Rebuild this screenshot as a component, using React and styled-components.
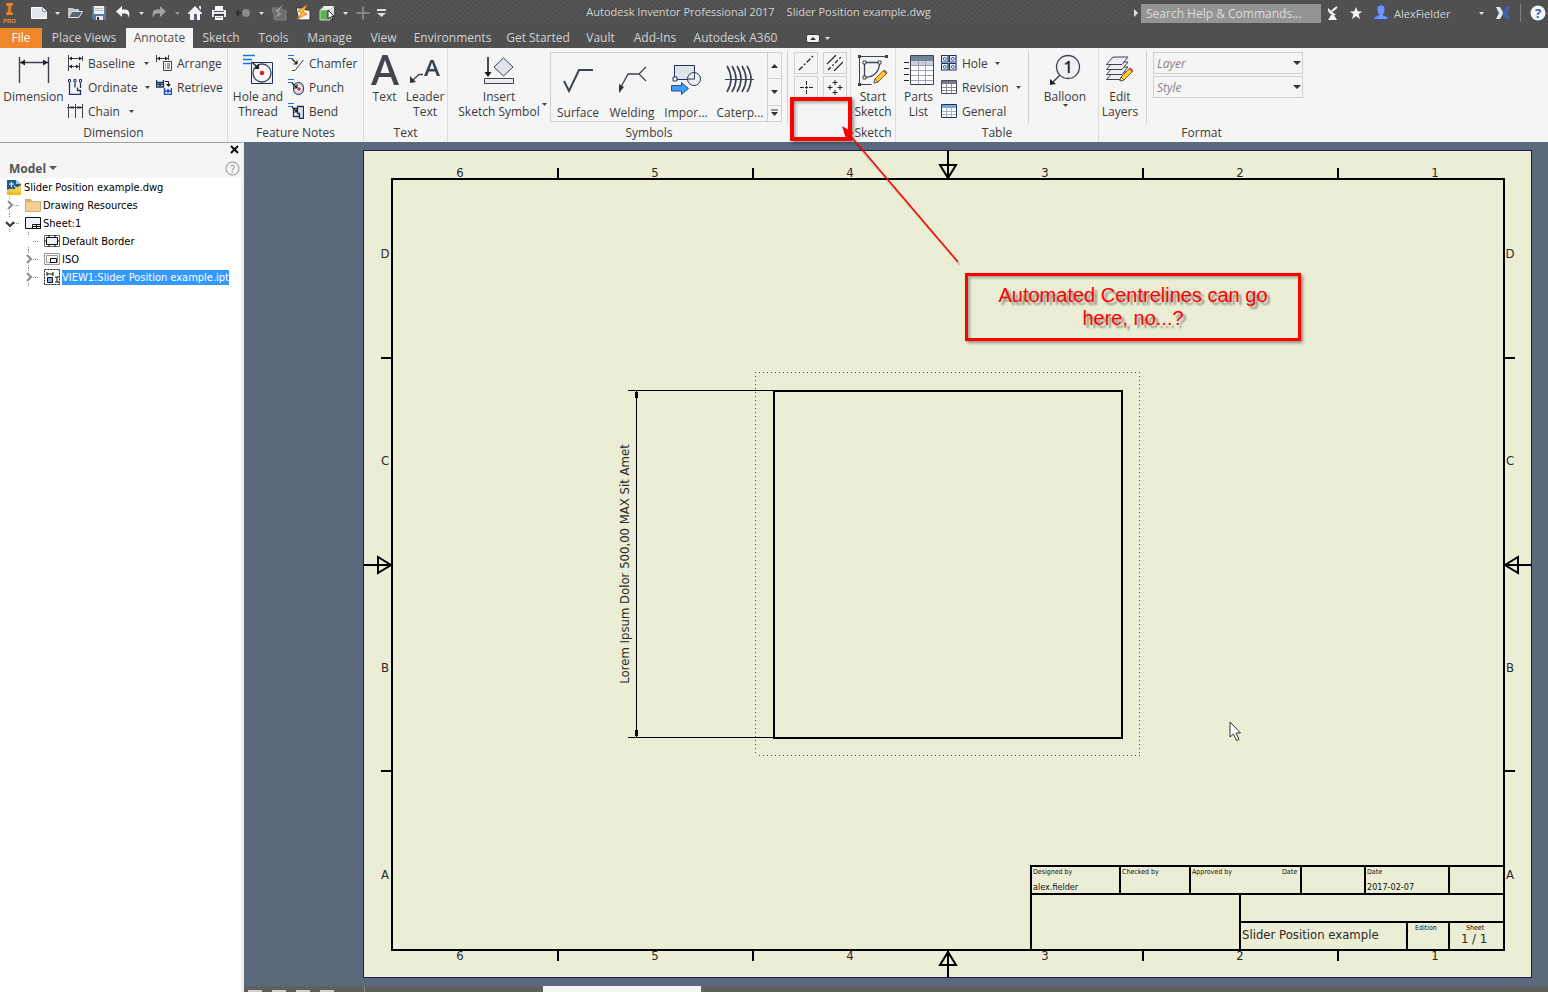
import React from "react";
import styled, { createGlobalStyle, css } from "styled-components";

const GlobalStyle = createGlobalStyle`
  *, *::before, *::after { box-sizing: border-box; }
  html, body { margin: 0; padding: 0; }
  body { font: 12px/15px "Open Sans", "Noto Sans", sans-serif; color: #3b3b3b; background: #fff; }
  button, input, select { font: inherit; color: inherit; border: 0; padding: 0; margin: 0; background: none; border-radius: 0; }
  ul { list-style: none; margin: 0; padding: 0; }
  svg { display: block; flex: none; }
`;

/* ---------- shell ---------- */
const Shell = styled.div`
  position: relative;
  display: flex;
  flex-direction: column;
  height: 100vh;
  overflow: hidden;
`;
const TitleBar = styled.header`
  display: flex;
  flex: none;
  height: 28px;
  background: #505050;
  color: #d2d2d2;
`;
const QuickAccess = styled.div`
  display: flex;
  flex: none;
  height: 26px;
  align-items: center;
`;
const AppButton = styled.button`
  width: 27px;
  padding-left: 3px;
`;
const QuickButton = styled.button`
  display: flex;
  align-items: center;
  justify-content: center;
  width: 24px;
  height: 24px;
  opacity: ${(p) => (p.$dim ? 0.5 : 1)};
`;
const QuickCaret = styled.button`
  display: flex;
  align-items: center;
  justify-content: center;
  width: 12px;
  height: 24px;
  opacity: ${(p) => (p.$dim ? 0.5 : 1)};
`;
const WindowTitle = styled.div`
  display: flex;
  flex: 1;
  justify-content: center;
  gap: 12px;
  height: 24px;
  font-size: 11px;
  line-height: 24px;
  white-space: nowrap;
  background: repeating-linear-gradient(135deg, #4e4e4e 0 2px, #545454 2px 4px);
`;
const Account = styled.div`
  display: flex;
  flex: none;
  align-items: center;
  width: 418px;
  height: 26px;
`;
const SearchBox = styled.input`
  width: 180px;
  height: 19px;
  padding: 0 5px;
  margin-right: 2px;
  background: #949494;
  &::placeholder { color: #dcdcdc; opacity: 1; }
`;
const IconButton = styled.button`
  display: flex;
  align-items: center;
  justify-content: center;
  width: ${(p) => p.$w || 24}px;
  height: 20px;
`;
const UserName = styled.button`
  width: 82px;
  height: 20px;
  padding-left: 1px;
  text-align: left;
  font-size: 11px;
`;
const Rule = styled.span`
  width: 1px;
  height: 18px;
  margin: 0 7px 0 1px;
  background: #808080;
`;

/* ---------- ribbon tabs ---------- */
const TabBar = styled.nav`
  display: flex;
  flex: none;
  height: 20px;
  background: #505050;
`;
const Tab = styled.button`
  width: ${(p) => p.$w}px;
  height: 20px;
  line-height: 20px;
  white-space: nowrap;
  text-align: center;
  color: #d2d2d2;
  ${(p) => p.$kind === "file" && css`background: #f0862a; color: #fff;`}
  ${(p) => p.$kind === "active" && css`background: #f5f5f5; color: #505050;`}
`;
const Collapse = styled.button`
  display: flex;
  align-items: center;
  gap: 5px;
  margin-left: 21px;
`;

/* ---------- ribbon ---------- */
const Ribbon = styled.div`
  display: flex;
  flex: none;
  height: 94px;
  background: #f5f5f5;
`;
const PanelBox = styled.section`
  display: flex;
  flex-direction: column;
  flex: none;
  width: ${(p) => p.$w}px;
  border-right: 1px solid ${(p) => (p.$last ? "transparent" : "#dcdcdc")};
`;
const PanelBody = styled.div`
  display: flex;
  height: 76px;
  padding-top: 3px;
`;
const PanelName = styled.h2`
  margin: 0;
  font-size: 12px;
  font-weight: 400;
  line-height: 18px;
  height: 18px;
  text-align: center;
`;
const Large = styled.button`
  position: relative;
  display: flex;
  flex-direction: column;
  align-items: center;
  justify-content: flex-start;
  flex: none;
  width: ${(p) => p.$w}px;
  height: 73px;
  white-space: nowrap;
  text-align: center;
`;
const LargeIcon = styled.span`
  display: flex;
  align-items: center;
  justify-content: center;
  height: 38px;
`;
const CornerCaret = styled.span`
  position: absolute;
  right: 3px;
  bottom: 18px;
`;
const Column = styled.div`
  display: flex;
  flex-direction: column;
  flex: none;
  width: ${(p) => p.$w}px;
`;
const Small = styled.button`
  display: flex;
  align-items: center;
  gap: 5px;
  height: 24px;
  white-space: nowrap;
  text-align: left;
`;
const SmallCaret = styled.span`
  margin-left: ${(p) => p.$gap}px;
`;
const Divider = styled.span`
  flex: none;
  width: 1px;
  height: 72px;
  margin: 0 6px 0 5px;
  background: #cfcfcf;
`;
const Gallery = styled.div`
  display: flex;
  flex: none;
  width: 232px;
  height: 70px;
  margin-top: 1px;
  border: 1px solid #cfcfcf;
`;
const GalleryItem = styled.button`
  display: flex;
  flex-direction: column;
  align-items: center;
  flex: 1;
  height: 68px;
  white-space: nowrap;
`;
const GalleryIcon = styled.span`
  display: flex;
  align-items: center;
  height: 52px;
`;
const Scroller = styled.div`
  display: flex;
  flex-direction: column;
  width: 14px;
  border-left: 1px solid #cfcfcf;
`;
const ScrollButton = styled.button`
  display: flex;
  align-items: center;
  justify-content: center;
  flex: ${(p) => p.$grow || 1};
  border-bottom: 1px solid #cfcfcf;
  &:last-child { border-bottom: 0; }
`;
const ToolGrid = styled.div`
  display: grid;
  grid-template-columns: 24px 24px;
  grid-auto-rows: 22px;
  gap: 2px 5px;
  padding-top: 1px;
`;
const ToolButton = styled.button`
  display: flex;
  align-items: center;
  justify-content: center;
  border: 1px solid #cfcfcf;
`;
const Selects = styled.div`
  display: flex;
  flex-direction: column;
  gap: 2px;
  padding-top: 1px;
`;
const SelectWrap = styled.label`
  position: relative;
  display: block;
  svg { position: absolute; right: 2px; top: 9px; pointer-events: none; }
`;
const Select = styled.select`
  appearance: none;
  display: block;
  width: 150px;
  height: 22px;
  padding: 0 3px;
  border: 1px solid #cfcfcf;
  color: #858585;
  font-style: italic;
`;

/* ---------- browser ---------- */
const Work = styled.div`
  display: flex;
  flex: 1;
  min-height: 0;
`;
const Browser = styled.aside`
  flex: none;
  width: 244px;
  background: #fff;
  border-top: 1px solid #a0a0a0;
  border-right: 3px solid #f0f0f0;
`;
const BrowserTop = styled.div`
  display: flex;
  align-items: flex-start;
  justify-content: flex-end;
  height: 15px;
  padding: 2px 2px 0 0;
  background: #f5f5f5;
`;
const BrowserButton = styled.button`
  display: flex;
`;
const BrowserHead = styled.div`
  display: flex;
  align-items: center;
  justify-content: space-between;
  height: 20px;
  padding: 0 1px 0 9px;
  background: #f5f5f5;
`;
const ModelButton = styled.button`
  display: flex;
  align-items: center;
  gap: 3px;
  font-size: 12px;
  font-weight: 700;
  color: #555;
`;
const TreeRow = styled.li`
  display: flex;
  align-items: center;
  height: 18px;
  padding-left: ${(p) => p.$indent}px;
  font: 11px/14px "DejaVu Sans Condensed", "Noto Sans", sans-serif;
  color: #000;
  white-space: nowrap;
`;
const Twisty = styled.span`
  flex: none;
  width: 20px;
`;
const TreeLabel = styled.span`
  margin-left: 2px;
  padding-top: 1px;
  ${(p) => p.$selected && css`background: #3399ff; color: #fff;`}
`;

/* ---------- drawing area ---------- */
const Viewport = styled.main`
  display: flex;
  flex-direction: column;
  flex: 1;
  min-width: 0;
  background: #5b697c;
`;
const SheetArea = styled.div`
  flex: 1;
  min-height: 0;
  overflow: hidden;
  padding: 8px 16px 8px 119px;
`;
const SheetSvg = styled.svg`
  width: 100%;
  height: auto;
  font-family: "DejaVu Sans Condensed", "Noto Sans", sans-serif;
  fill: #2a2a2a;
`;
const StatusBar = styled.footer`
  display: flex;
  flex: none;
  height: 6px;
  background: #5f5f5f;
`;
const StatusTools = styled.div`
  display: flex;
  align-items: flex-end;
  gap: 10px;
  width: 121px;
  padding-left: 4px;
  border-right: 1px solid #8a8a8a;
`;
const StatusTool = styled.span`
  width: 14px;
  height: 2px;
  background: #cfcfcf;
`;
const DocTab = styled.div`
  width: 158px;
  margin-left: 178px;
  background: #f5f5f5;
`;

/* ---------- mark-up over the window ---------- */
const Highlight = styled.div`
  position: absolute;
  left: 790px;
  top: 97px;
  width: 62px;
  height: 44px;
  border: 4px solid #f00;
  background: #f5f5f5;
  box-shadow: 2px 2px 3px rgba(0, 0, 0, 0.4), inset 2px 2px 3px rgba(0, 0, 0, 0.3);
`;
const Callout = styled.div`
  position: absolute;
  left: 965px;
  top: 273px;
  width: 336px;
  padding: 8px 24px;
  border: 3px solid #f00;
  color: #f00;
  font: 20px/23px "Liberation Sans", Arial, sans-serif;
  text-align: center;
  text-shadow: 3px 3px 2px rgba(0, 0, 0, 0.4);
  box-shadow: 2px 2px 3px rgba(0, 0, 0, 0.4), inset 2px 2px 3px rgba(0, 0, 0, 0.3);
`;
const Pointer = styled.svg`
  position: absolute;
  left: ${(p) => p.$x}px;
  top: ${(p) => p.$y}px;
  pointer-events: none;
`;

/* ---------- icons ---------- */
const Ico = ({ w = 16, h = 16, children, ...rest }) => (
  <svg width={w} height={h} viewBox={`0 0 ${w} ${h}`} fill="none" aria-hidden="true" {...rest}>{children}</svg>
);
const Caret = ({ w = 5, h = 3, color = "#444" }) => (
  <Ico w={w} h={h}><path d={`M0 0H${w}L${w / 2} ${h}Z`} fill={color} /></Ico>
);
const ink = "#3b4250";
const navy = "#1d3461";

const LogoIcon = () => (
  <Ico w={14} h={22}>
    <path d="M3 1h7v2l-2 1v6l2 1v2H3v-2l2-1V4L3 3z" fill="#e8842c" />
    <path d="M5 4v6M8 4v6" stroke="#a85a18" />
    <text x="0" y="21" fontSize="6" fontFamily="Liberation Sans" fontWeight="700" fill="#e88a38">PRO</text>
  </Ico>
);
const NewIcon = () => <Ico><path d="M.5 2.500h11l4 4v7H.5z" fill="#e4e7ee" stroke="#fff" /><path d="M11.500 2.500v4h4" stroke="#8e939c" /></Ico>;
const OpenIcon = () => <Ico><path d="M1 12V3h5l1 1h5v3H5z" fill="#bfc5cf" /><path d="M1.500 12.500L5 6.500h10.500L12 12.500z" fill="#5c6470" stroke="#dfe3ea" /></Ico>;
const SaveIcon = () => <Ico><path d="M1 1h14v14H3l-2-2z" fill="#63769a" /><path d="M3 1h10v8H3z" fill="#f2f2f2" /><path d="M4 3.500h8M4 5.500h8" stroke="#b5bac4" /><path d="M5 11h7v4H5z" fill="#e6e6e6" /><path d="M6 12h2v3H6z" fill="#333" /></Ico>;
const UndoIcon = ({ flip }) => <Ico transform={flip ? "scale(-1 1)" : undefined}><path d="M1 6.500L7 1v3.500h3c4 0 5 3 4 8.500-1-3.500-2-4.500-4-4.500H7V12z" fill="#f4f4f4" /></Ico>;
const HomeIcon = () => <Ico><path d="M8 1l7 7v1h-2v6H3V9H1V8z" fill="#f4f5f8" /><path d="M12 1h2v4l-2-2z" fill="#dfe3ea" /><path d="M7 9h3v6H7z" fill="#5a6272" /></Ico>;
const PrintIcon = () => <Ico><path d="M4 1h8v5H4zM4 11h8v4H4z" fill="#fff" /><path d="M1 5h14v7h-2v-2H3v2H1z" fill="#e8ebf0" /><path d="M3 6.500h10" stroke="#555c68" /><path d="M3 9.500h10" stroke="#333" /><path d="M5 12.500h6" stroke="#999" /></Ico>;
const ReturnIcon = () => <Ico><path d="M0 8l4-4v3h3v2H4v3z" fill="#111" /><circle cx="11" cy="8" r="4" fill="#c4c4c4" /></Ico>;
const UpdateIcon = ({ on }) => (
  <Ico>
    <path d="M1 3h8l2 2h4v10H4z" fill={on ? "#f2f2f2" : "#8a8a8a"} stroke={on ? "#333" : "#b0b0b0"} />
    <path d="M12 0L3 6l4 2-5 6 10-5-4-2z" fill={on ? "#ffc83a" : "#e4e4e4"} stroke={on ? "#e2781a" : "#8a8a8a"} />
  </Ico>
);
const CubeIcon = () => <Ico><path d="M1 5l4-4h10l-4 4z" fill="#e9efe9" /><path d="M11 5l4-4v9l-4 5z" fill="#dfe5df" /><path d="M1 5h10v10H1z" fill="#62ad57" stroke="#b9deb2" /><path d="M9 5v9l2-2 1.500 3 1.500-.7-1.500-3H15z" fill="#fff" stroke="#222" /></Ico>;
const PlusIcon = () => <Ico><path d="M8 1.500v13M1.500 8h13" stroke="#858585" strokeWidth="2" /></Ico>;
const CustomizeIcon = () => <Ico w={9} h={8}><path d="M0 1h9" stroke="#ddd" strokeWidth="2" /><path d="M0 4h9L4.500 8z" fill="#ddd" /></Ico>;
const DishIcon = () => <Ico><path d="M3 3c-1 4 3 8 8 7z" fill="#eef0f3" /><path d="M7 6l5-4" stroke="#fff" strokeWidth="2" /><path d="M3 15l3-5h3l3 5z" fill="#eee" /></Ico>;
const StarIcon = () => <Ico><path d="M8 .8l2 5.200h5.300L11 9.200 12.700 15 8 11.600 3.300 15 5 9.200.7 6H6z" fill="#f2f4f8" stroke="#333" strokeWidth=".6" /></Ico>;
const UserIcon = () => <Ico><path d="M8 0c3 0 4 2 4 4s-1 5-2 6c2 .6 5 2 5.500 4.500H.5C1 12 4 10.600 6 10 5 9 4 6 4 4s1-4 4-4z" fill="#6f95ee" stroke="#2c4da8" strokeWidth=".8" /></Ico>;
const ExchangeIcon = () => <Ico><path d="M1 2h4l3.500 6L5 14H1l3-6z" fill="#dfe6f5" /><path d="M15 2h-4L7.500 8l3.500 6h4l-3-6z" fill="#3f62b8" /></Ico>;
const HelpIcon = () => <Ico><circle cx="8" cy="8" r="7.500" fill="#f5f6f8" /><text x="8" y="13" textAnchor="middle" fontSize="13" fontWeight="700" fontFamily="Open Sans" fill="#2f5fc4">?</text></Ico>;

const DimensionIcon = () => <Ico w={32} h={30}><path d="M1.500 2v26M30.500 2v26M2 7.500h28" stroke={ink} strokeWidth="1.400" /><path d="M2 7.500l5-3v6zM30 7.500l-5-3v6z" fill="#222" /></Ico>;
const BaselineIcon = () => <Ico><path d="M1.500 0v16M2 3.500h13.500M15.500 1v5M2 11.500h10M12.500 8v7" stroke={ink} /><path d="M2 3.500l3-2v4zM15 3.500l-3-2v4zM2 11.500l3-2v4zM12 11.500l-3-2v4z" fill="#222" /></Ico>;
const OrdinateIcon = () => <Ico><path d="M2.500 3.500v12h5M8 3.500v5M13.500 3.500V9M7.500 15.500h6v-4h-3V8.500" stroke={navy} strokeWidth="1.300" /><path d="M1.500.5h2v2.500h-2zM7 .5h2v2.500H7zM12.500.5h2v2.500h-2z" stroke={navy} /></Ico>;
const ChainIcon = () => <Ico><path d="M1.500 1v14M8.500 1v14M15.500 1v14M0 4.500h16" stroke={ink} /><path d="M2 4.500l2.500-1.500v3zM8 4.500L5.500 3v3zM9 4.500l2.500-1.500v3zM15 4.500L12.500 3v3z" fill="#222" /></Ico>;
const ArrangeIcon = () => <Ico><path d="M.5 0v7M12.500 0v5M1 3.500h11" stroke={ink} /><path d="M1 3.500l3-2v4zM12 3.500l-3-2v4z" fill="#222" /><path d="M7.500 6.500h8v9h-8z" fill="#fff" stroke={ink} /><path d="M9 9h1M9 11h1M9 13h1M11 9h3M11 11h3M11 13h3" stroke={ink} /></Ico>;
const RetrieveIcon = () => <Ico><path d="M.5 1v7h7V1M1 3.500h6M4 3v5M.5 5.500h7" stroke={navy} strokeWidth="1.300" /><path d="M9 2.500h3.500V6" stroke="#222" /><path d="M10 5h5l-2.500 3z" fill="#222" /><path d="M8.500 9v6.500h7V9M8.500 12h7M12 10v4" stroke="#1d4fc0" strokeWidth="1.500" /></Ico>;
const blueLines = <path d="M0 .5h6M0 3.500h5" stroke="#1a73d9" />;
const noteArrow = <path d="M4 4l5 5M9 9V5.500M9 9H5.500" stroke="#222" strokeWidth="1.200" />;
const HoleThreadIcon = () => <Ico w={32} h={32}><path d="M9.500 8.500h21v21h-21z" fill="#e9ecf2" stroke={navy} /><circle cx="20" cy="19" r="9" fill="#f8f9fb" stroke={ink} strokeWidth="1.300" /><circle cx="20" cy="19" r="2.300" fill="#e02020" /><path d="M1 1.500h12M1 5.500h9M1 9.500h8" stroke="#1a73d9" strokeWidth="1.500" /><path d="M10 8l5 5" stroke="#222" strokeWidth="1.300" /><path d="M17 15v-5l-5 5z" fill="#222" /></Ico>;
const ChamferIcon = () => <Ico>{blueLines}{noteArrow}<path d="M4 15.500h3L15.500 5" stroke={ink} /></Ico>;
const PunchIcon = () => <Ico><rect x="5.500" y="3.500" width="10" height="12" rx="5" fill="#c9cdd8" stroke={navy} /><circle cx="10.500" cy="9.500" r="3.200" fill="#fff" /><circle cx="11" cy="10" r="1.700" fill="#e02020" />{blueLines}{noteArrow}</Ico>;
const BendIcon = () => <Ico><path d="M5.500 5.500h6v8h-6z" fill="#fff" stroke={navy} strokeWidth="1.300" /><path d="M9.500 3.500h6v12h-4v-5h-2z" fill="#dfe3ea" stroke={navy} strokeWidth="1.300" />{blueLines}{noteArrow}</Ico>;
const TextIcon = () => <Ico w={30} h={32}><path d="M1 31L12.500 1h5L29 31h-5l-3-8H9l-3 8zM10.500 19h9L15 6z" fill="#47434f" fillRule="evenodd" /></Ico>;
const LeaderIcon = () => <Ico w={30} h={28}><path d="M14 20L20.500 4h3L30 20h-3.200l-1.600-4.500h-6.400L17.200 20zm5.700-7h4.600L22 6.500z" fill={ink} fillRule="evenodd" /><path d="M13 18.500H9L3 24" stroke={ink} strokeWidth="1.300" /><path d="M0 27v-7l6 6z" fill="#333" /></Ico>;
const InsertSymbolIcon = () => <Ico w={32} h={30}><path d="M5 2v16" stroke="#111" strokeWidth="1.500" /><path d="M1.500 17h7L5 22z" fill="#111" /><path d="M20.500 3L30 12l-9.500 9L11 12z" fill="#dfe3ea" stroke={ink} /><path d="M1.500 23.500h29v5h-29z" fill="#eceef2" stroke={ink} /></Ico>;
const SurfaceIcon = () => <Ico w={32} h={32}><path d="M2 18l5 10L17 7h14" stroke={ink} strokeWidth="2" /></Ico>;
const WeldingIcon = () => <Ico w={30} h={30}><path d="M4 23L11 10h11M22 10l7-7M22 10l7 7" stroke={ink} strokeWidth="1.300" /><path d="M2 29V20l5 3z" fill="#333" /></Ico>;
const ImportIcon = () => <Ico w={32} h={32}><path d="M4.500 2.500h20v14h-20z" fill="#dfe3ea" stroke={navy} /><circle cx="24" cy="16" r="6.500" fill="#eef1f6" fillOpacity=".8" stroke={navy} /><path d="M24.500 9v7H18" stroke={ink} /><path d="M3 14h4v4H3z" fill="#fff" stroke={navy} /><path d="M1.500 22.500h10v-3l7 6-7 6v-3.500h-10z" fill="#3f9bf5" stroke="#1b4f9c" /></Ico>;
const CaterpillarIcon = () => <Ico w={30} h={32}>{[2, 7, 12, 17, 22].map((x) => <path key={x} d={`M${x} 3q8 13 0 26`} stroke={ink} strokeWidth="1.600" />)}<path d="M0 16.500h29" stroke={ink} /></Ico>;
const CenterlineIcon = () => <Ico><path d="M1 15L15 1" stroke="#222" strokeWidth="1.300" strokeDasharray="5 2 2 2" /></Ico>;
const BisectorIcon = () => <Ico><path d="M0 9L9 0M7 16L16 7" stroke="#222" strokeWidth="1.200" /><path d="M1 15L15 1" stroke="#222" strokeWidth="1.300" strokeDasharray="4 2 2 2" /></Ico>;
const CenterMarkIcon = () => <Ico><path d="M8.500 2v4M8.500 11v4M2 8.500h4M11 8.500h4M7 8.500h3M8.500 7v3" stroke="#222" /></Ico>;
const PatternIcon = () => <Ico><path d="M8 1v5M5.500 3.500h5M8 11v5M5.500 13.500h5M3 6v5M.5 8.500h5M13 6v5M10.500 8.500h5" stroke="#222" /></Ico>;
const Pencil = ({ x, y }) => <g transform={`translate(${x} ${y})`}><path d="M1 14l1-4L11 1l3 3-9 9z" fill="#ffc93c" stroke="#8a5a13" /><path d="M10 2l1.500-1.500 3 3L13 5z" fill="#b4583b" /><path d="M1 14l1-4 3 3z" fill="#f8ead0" stroke="#333" strokeWidth=".6" /></g>;
const StartSketchIcon = () => <Ico w={32} h={32}><path d="M2.500 30.500V2.500h27M2.500 30.500h12" stroke={ink} /><path d="M1 1h3v3H1zM28 1h3v3h-3zM1 29h3v3H1z" fill={ink} /><path d="M7.500 9v14M9 8.500h14M22.500 10q-1 12-14 13.500" stroke={ink} strokeWidth="1.300" /><path d="M6 7h3v3H6zM21 7h3v3h-3zM6 22h3v3H6z" fill="#fff" stroke={ink} /><Pencil x={16} y={15} /></Ico>;
const PartsListIcon = () => <Ico w={32} h={32}><path d="M7.500 1.500h23v29h-23z" fill="#fff" stroke={ink} /><path d="M8 2h22v5H8z" fill="#70839a" /><path d="M8 7h22v4H8z" fill="#c6d0da" /><path d="M8 11.500h22M8 16.500h22M8 21.500h22M8 26.500h22M15.500 7v23M22.500 7v23" stroke="#9aa3b0" /><path d="M1 8.500h5M1 14.500h5M1 20.500h5M1 26.500h5" stroke="#222" /></Ico>;
const HoleTableIcon = () => <Ico><path d="M.5.5h6.500v6.500H.5zM8.500.5h6.500v6.500H8.500zM.5 8.500h6.500V15H.5zM8.500 8.500h6.500V15H8.500z" fill="#fff" stroke={navy} strokeWidth="1.200" /><g stroke="#1d4fc0"><circle cx="3.800" cy="3.800" r="1.500" /><circle cx="11.800" cy="3.800" r="1.500" /><circle cx="3.800" cy="11.800" r="1.500" /><circle cx="11.800" cy="11.800" r="1.500" /></g></Ico>;
const TableIcon = ({ edge, top, line }) => <Ico><path d="M.5 1.500h15v13H.5z" fill="#fff" stroke={edge} /><path d="M1 2h14v3H1z" fill={top} /><path d="M1 8.500h14M1 11.500h14M5.500 5v9M10.500 5v9" stroke={line} /></Ico>;
const BalloonIcon = () => <Ico w={32} h={32}><circle cx="19" cy="13" r="11.500" fill="#eef0f4" stroke={ink} strokeWidth="1.300" /><path d="M11 21l-7 7" stroke={ink} strokeWidth="1.500" /><path d="M1 31v-6l6 5z" fill="#222" /><text x="19" y="19" textAnchor="middle" fontSize="16" fontWeight="600" fontFamily="Open Sans" fill="#222">1</text></Ico>;
const EditLayersIcon = () => <Ico w={30} h={32}>{[18, 13, 8, 3].map((y) => <path key={y} d={`M1.500 ${y + 7.5}L8 ${y}h15l-6 7.500z`} fill="#eceef2" stroke={ink} />)}<Pencil x={14} y={13} /></Ico>;

const CloseIcon = () => <Ico w={9} h={9}><path d="M1 1l7 7M8 1L1 8" stroke="#000" strokeWidth="1.800" /></Ico>;
const PanelHelpIcon = () => <Ico w={15} h={15}><circle cx="7.500" cy="7.500" r="6.500" stroke="#8f8f8f" /><text x="7.500" y="11.500" textAnchor="middle" fontSize="11" fontFamily="Open Sans" fill="#8f8f8f">?</text></Ico>;
const DwgIcon = () => <Ico w={15} h={15}><path d="M0 0h9l5 4v6H0z" fill="#1f5f8f" /><path d="M9 0v4h5z" fill="#9ec9e8" /><path d="M2 4h5M4.500 2v5M7 6l3 2" stroke="#fff" /><path d="M0 11q4-3 7 0l7 1v3H0z" fill="#f2bb1d" /><path d="M0 10q4-2 7-1l7-4v7l-7 1z" fill="#f2cf4a" /></Ico>;
const FolderIcon = () => <Ico><path d="M0 2h6l1 2h9v10H0z" fill="#d6b06c" /><path d="M0 5h16v9.500H0z" fill="#f1d093" /><path d="M.5 5v9.500h15V4.500" stroke="#c09a58" strokeWidth=".7" /></Ico>;
const SheetIcon = () => <Ico><path d="M.5 2.500h15v11H.5z" fill="#eef3fa" stroke="#111" /><path d="M7.500 9.500h8v4h-8zM8 11.500h7M11.500 10v3" stroke="#111" /></Ico>;
const BorderIcon = () => <Ico><path d="M.5 2.500h15v11H.5z" stroke="#666" /><path d="M2.500 4.500h11v7h-11z" fill="#eef3fa" stroke="#111" /><path d="M5 2v2M11 2v2M5 12v2M11 12v2M1 8h1M14 8h1" stroke="#111" /></Ico>;
const IsoIcon = () => <Ico><path d="M.5 2.500h15v11H.5zM2.500 4.500h11v7h-11z" stroke="#999" /><path d="M6.500 7.500h6v4h-6z" fill="#eef3fa" stroke="#111" /></Ico>;
const ViewIcon = () => <Ico><path d="M.5 .5h15v15H.5z" stroke="#111" strokeDasharray="2 1" /><path d="M3.500 8.500h5v5h-5z" fill="#7db7e8" stroke="#111" /><path d="M3 3v4M9 3v4M3 5h6M11 8h4M11 13h4M13 8v5" stroke="#111" /></Ico>;
const TwistyIcon = ({ state }) => (
  <Ico w={14} h={18}>
    {state === "closed" && <path d="M3 5l4 4-4 4" stroke="#8c8c8c" strokeWidth="2" />}
    {state === "open" && <path d="M1 8l4 4 4-4" stroke="#333" strokeWidth="2" />}
    <path d="M4.500 0v3M4.500 15v3M9 9.500h5" stroke="#888" strokeDasharray="1 1" />
  </Ico>
);

/* ---------- pieces ---------- */
const Panel = ({ name, w, last, children }) => (
  <PanelBox $w={w} $last={last}>
    <PanelBody>{children}</PanelBody>
    <PanelName>{name}</PanelName>
  </PanelBox>
);
const LargeTool = ({ icon, lines, w, caret }) => (
  <Large $w={w}>
    <LargeIcon>{icon}</LargeIcon>
    {lines.map((l) => <span key={l}>{l}</span>)}
    {caret === "below" && <Caret />}
    {caret === "corner" && <CornerCaret><Caret /></CornerCaret>}
  </Large>
);
const SmallTool = ({ icon, label, caret }) => (
  <Small>
    {icon}
    {label}
    {caret && <SmallCaret $gap={caret}><Caret /></SmallCaret>}
  </Small>
);

const tabs = [
  ["File", 42, "file"], ["Place Views", 84], ["Annotate", 67, "active"], ["Sketch", 56], ["Tools", 49],
  ["Manage", 63], ["View", 45], ["Environments", 93], ["Get Started", 78], ["Vault", 47], ["Add-Ins", 62],
  ["Autodesk A360", 99],
];
const tree = [
  { label: "Slider Position example.dwg", indent: 7, icon: <DwgIcon /> },
  { label: "Drawing Resources", indent: 5, icon: <FolderIcon />, state: "closed" },
  { label: "Sheet:1", indent: 5, icon: <SheetIcon />, state: "open" },
  { label: "Default Border", indent: 24, icon: <BorderIcon />, state: "leaf" },
  { label: "ISO", indent: 24, icon: <IsoIcon />, state: "closed" },
  { label: "VIEW1:Slider Position example.ipt", indent: 24, icon: <ViewIcon />, state: "closed", selected: true },
];

const Sheet = () => (
  <SheetSvg viewBox="363 150 1169 828" role="img" aria-label="Drawing sheet">
    <rect x="363.500" y="150.500" width="1168" height="827" fill="#ecedd5" stroke="#1c1c50" />
    <g fill="none" stroke="#000" strokeWidth="2">
      <rect x="392" y="179" width="1112" height="771" />
      {[558, 753, 1143, 1338].map((x) => <path key={x} d={`M${x} 168v11M${x} 950v11`} />)}
      {[358, 771].map((y) => <path key={y} d={`M381 ${y}h11M1504 ${y}h11`} />)}
      <path d="M948 151v28M940 165h16l-8 13z" />
      <path d="M948 977v-27M940 965h16l-8-13z" />
      <path d="M364 565h28M378 557v16l13-8z" />
      <path d="M1532 565h-28M1518 557v16l-13-8z" />
      <rect x="774" y="391" width="348" height="347" />
      <path d="M1031 951V866h473M1031 894h473M1120 866v28M1190 866v28M1301 866v28M1365 866v28M1449 866v28M1240 894v56M1240 922h264M1407 922v28M1449 922v28" />
    </g>
    <g fill="none" stroke="#000">
      <path d="M628 390.500h146M628 737.500h146M636.500 391v346" />
      <path d="M636.500 392v6M636.500 730v6" strokeWidth="3" />
    </g>
    <path d="M755 372.500h385M755.500 376v380M759 755.500h381M1139.500 376v380" fill="none" stroke="#0a7a1a" strokeDasharray="1 3" />
    <g fontSize="13" textAnchor="middle">
      {[6, 5, 4, 3, 2, 1].map((n, i) => (
        <React.Fragment key={n}>
          <text x={460 + i * 195} y="177">{n}</text>
          <text x={460 + i * 195} y="960">{n}</text>
        </React.Fragment>
      ))}
      {["D", "C", "B", "A"].map((c, i) => (
        <React.Fragment key={c}>
          <text x="385" y={258 + i * 207}>{c}</text>
          <text x="1510" y={258 + i * 207}>{c}</text>
        </React.Fragment>
      ))}
      <text transform="translate(629 564) rotate(-90)">Lorem Ipsum Dolor 500,00 MAX Sit Amet</text>
      <text x="1474" y="943">1 / 1</text>
    </g>
    <text x="1242" y="939" fontSize="13">Slider Position example</text>
    <g fill="#111">
      <g fontSize="7">
        <text x="1033" y="874">Designed by</text>
        <text x="1122" y="874">Checked by</text>
        <text x="1192" y="874">Approved by</text>
        <text x="1282" y="874">Date</text>
        <text x="1367" y="874">Date</text>
        <text x="1415" y="930">Edition</text>
        <text x="1466" y="930">Sheet</text>
      </g>
      <g fontSize="9">
        <text x="1033" y="890">alex.fielder</text>
        <text x="1367" y="890">2017-02-07</text>
      </g>
    </g>
  </SheetSvg>
);

export default function App() {
  return (
    <Shell>
      <GlobalStyle />
      <TitleBar>
        <QuickAccess>
          <AppButton aria-label="Inventor"><LogoIcon /></AppButton>
          <QuickButton aria-label="New"><NewIcon /></QuickButton>
          <QuickCaret aria-label="New options"><Caret color="#ddd" /></QuickCaret>
          <QuickButton aria-label="Open"><OpenIcon /></QuickButton>
          <QuickButton aria-label="Save"><SaveIcon /></QuickButton>
          <QuickButton aria-label="Undo"><UndoIcon /></QuickButton>
          <QuickCaret aria-label="Undo list"><Caret color="#ddd" /></QuickCaret>
          <QuickButton aria-label="Redo" $dim><UndoIcon flip /></QuickButton>
          <QuickCaret aria-label="Redo list" $dim><Caret color="#ddd" /></QuickCaret>
          <QuickButton aria-label="Home"><HomeIcon /></QuickButton>
          <QuickButton aria-label="Print"><PrintIcon /></QuickButton>
          <QuickButton aria-label="Return" $dim><ReturnIcon /></QuickButton>
          <QuickCaret aria-label="Return options"><Caret color="#ddd" /></QuickCaret>
          <QuickButton aria-label="Local update" $dim><UpdateIcon /></QuickButton>
          <QuickButton aria-label="Update"><UpdateIcon on /></QuickButton>
          <QuickButton aria-label="Select"><CubeIcon /></QuickButton>
          <QuickCaret aria-label="Select options"><Caret color="#ddd" /></QuickCaret>
          <QuickButton aria-label="Add"><PlusIcon /></QuickButton>
          <QuickCaret aria-label="Customize"><CustomizeIcon /></QuickCaret>
        </QuickAccess>
        <WindowTitle>
          <span>Autodesk Inventor Professional 2017</span>
          <span>Slider Position example.dwg</span>
        </WindowTitle>
        <Account>
          <IconButton $w={11} aria-label="Expand search"><Ico w={4} h={8}><path d="M0 0l4 4-4 4z" fill="#ddd" /></Ico></IconButton>
          <SearchBox aria-label="Search" placeholder="Search Help &amp; Commands..." />
          <IconButton aria-label="Communication center" $w={20}><DishIcon /></IconButton>
          <IconButton aria-label="Favorites" $w={26}><StarIcon /></IconButton>
          <IconButton aria-label="Account"><UserIcon /></IconButton>
          <UserName>AlexFielder</UserName>
          <IconButton $w={12} aria-label="Account menu"><Caret color="#ddd" /></IconButton>
          <IconButton aria-label="Exchange" $w={32}><ExchangeIcon /></IconButton>
          <Rule />
          <IconButton aria-label="Help" $w={20}><HelpIcon /></IconButton>
        </Account>
      </TitleBar>
      <TabBar>
        {tabs.map(([label, w, kind]) => <Tab key={label} $w={w} $kind={kind}>{label}</Tab>)}
        <Collapse aria-label="Minimize ribbon">
          <Ico w={14} h={9}><rect x=".5" y=".5" width="13" height="8" rx="2" fill="#f2f2f2" stroke="#333" /><path d="M4 6l3-3 3 3z" fill="#333" /></Ico>
          <Caret color="#ddd" />
        </Collapse>
      </TabBar>
      <Ribbon>
        <Panel name="Dimension" w={228}>
          <LargeTool icon={<DimensionIcon />} lines={["Dimension"]} w={67} />
          <Column $w={89}>
            <SmallTool icon={<BaselineIcon />} label="Baseline" caret={4} />
            <SmallTool icon={<OrdinateIcon />} label="Ordinate" caret={2} />
            <SmallTool icon={<ChainIcon />} label="Chain" caret={4} />
          </Column>
          <Column $w={70}>
            <SmallTool icon={<ArrangeIcon />} label="Arrange" />
            <SmallTool icon={<RetrieveIcon />} label="Retrieve" />
          </Column>
        </Panel>
        <Panel name="Feature Notes" w={136}>
          <LargeTool icon={<HoleThreadIcon />} lines={["Hole and", "Thread"]} w={60} />
          <Column $w={70}>
            <SmallTool icon={<ChamferIcon />} label="Chamfer" />
            <SmallTool icon={<PunchIcon />} label="Punch" />
            <SmallTool icon={<BendIcon />} label="Bend" />
          </Column>
        </Panel>
        <Panel name="Text" w={84}>
          <LargeTool icon={<TextIcon />} lines={["Text"]} w={41} />
          <LargeTool icon={<LeaderIcon />} lines={["Leader", "Text"]} w={40} />
        </Panel>
        <Panel name="Symbols" w={403}>
          <LargeTool icon={<InsertSymbolIcon />} lines={["Insert", "Sketch Symbol"]} w={102} caret="corner" />
          <Gallery>
            <GalleryItem><GalleryIcon><SurfaceIcon /></GalleryIcon>Surface</GalleryItem>
            <GalleryItem><GalleryIcon><WeldingIcon /></GalleryIcon>Welding</GalleryItem>
            <GalleryItem><GalleryIcon><ImportIcon /></GalleryIcon>Impor...</GalleryItem>
            <GalleryItem><GalleryIcon><CaterpillarIcon /></GalleryIcon>Caterp...</GalleryItem>
            <Scroller>
              <ScrollButton $grow={5} aria-label="Scroll up"><Ico w={7} h={4}><path d="M0 4h7L3.500 0z" fill="#333" /></Ico></ScrollButton>
              <ScrollButton $grow={5} aria-label="Scroll down"><Caret w={7} h={4} color="#333" /></ScrollButton>
              <ScrollButton $grow={3} aria-label="More symbols"><Ico w={7} h={8}><path d="M0 1h7" stroke="#333" /><path d="M0 3h7L3.500 7z" fill="#333" /></Ico></ScrollButton>
            </Scroller>
          </Gallery>
          <Divider />
          <ToolGrid>
            <ToolButton aria-label="Centerline"><CenterlineIcon /></ToolButton>
            <ToolButton aria-label="Centerline bisector"><BisectorIcon /></ToolButton>
            <ToolButton aria-label="Center mark"><CenterMarkIcon /></ToolButton>
            <ToolButton aria-label="Centered pattern"><PatternIcon /></ToolButton>
          </ToolGrid>
        </Panel>
        <Panel name="Sketch" w={45}>
          <LargeTool icon={<StartSketchIcon />} lines={["Start", "Sketch"]} w={44} />
        </Panel>
        <Panel name="Table" w={203}>
          <LargeTool icon={<PartsListIcon />} lines={["Parts", "List"]} w={45} />
          <Column $w={82}>
            <SmallTool icon={<HoleTableIcon />} label="Hole" caret={2} />
            <SmallTool icon={<TableIcon edge="#4a4654" top="#7d7888" line="#8f8b98" />} label="Revision" caret={2} />
            <SmallTool icon={<TableIcon edge={navy} top="#7fa6cc" line="#9db4cc" />} label="General" />
          </Column>
          <Divider />
          <LargeTool icon={<BalloonIcon />} lines={["Balloon"]} w={60} caret="below" />
        </Panel>
        <Panel name="Format" w={206} last>
          <LargeTool icon={<EditLayersIcon />} lines={["Edit", "Layers"]} w={42} />
          <Divider />
          <Selects>
            <SelectWrap><Select aria-label="Layer"><option>Layer</option></Select><Caret w={8} h={4} color="#333" /></SelectWrap>
            <SelectWrap><Select aria-label="Style"><option>Style</option></Select><Caret w={8} h={4} color="#333" /></SelectWrap>
          </Selects>
        </Panel>
      </Ribbon>
      <Work>
        <Browser>
          <BrowserTop><BrowserButton aria-label="Close"><CloseIcon /></BrowserButton></BrowserTop>
          <BrowserHead>
            <ModelButton>Model <Caret w={8} h={4} color="#555" /></ModelButton>
            <BrowserButton aria-label="Browser help"><PanelHelpIcon /></BrowserButton>
          </BrowserHead>
          <ul>
            {tree.map((row) => (
              <TreeRow key={row.label} $indent={row.indent}>
                {row.state && <Twisty><TwistyIcon state={row.state} /></Twisty>}
                {row.icon}
                <TreeLabel $selected={row.selected}>{row.label}</TreeLabel>
              </TreeRow>
            ))}
          </ul>
        </Browser>
        <Viewport>
          <SheetArea><Sheet /></SheetArea>
          <StatusBar>
            <StatusTools><StatusTool /><StatusTool /><StatusTool /><StatusTool /></StatusTools>
            <DocTab />
          </StatusBar>
        </Viewport>
      </Work>
      <Highlight />
      <Callout>Automated Centrelines can go here, no...?</Callout>
      <Pointer $x={836} $y={120} width="130" height="150" viewBox="836 120 130 150" aria-hidden="true">
        <path d="M851 138L960 265" stroke="#000" strokeOpacity=".15" strokeWidth="2" />
        <path d="M849 134L958 262" stroke="#f00" strokeWidth="1.500" />
        <path d="M842 126l4 13 3-4 5-2z" fill="#f00" />
      </Pointer>
      <Pointer $x={1229} $y={721} width="13" height="21" viewBox="0 0 13 21" aria-hidden="true">
        <path d="M1 1v15l3.500-3 3 6.500 2.500-1-3-6.500h4.500z" fill="#fff" stroke="#333" />
      </Pointer>
    </Shell>
  );
}
